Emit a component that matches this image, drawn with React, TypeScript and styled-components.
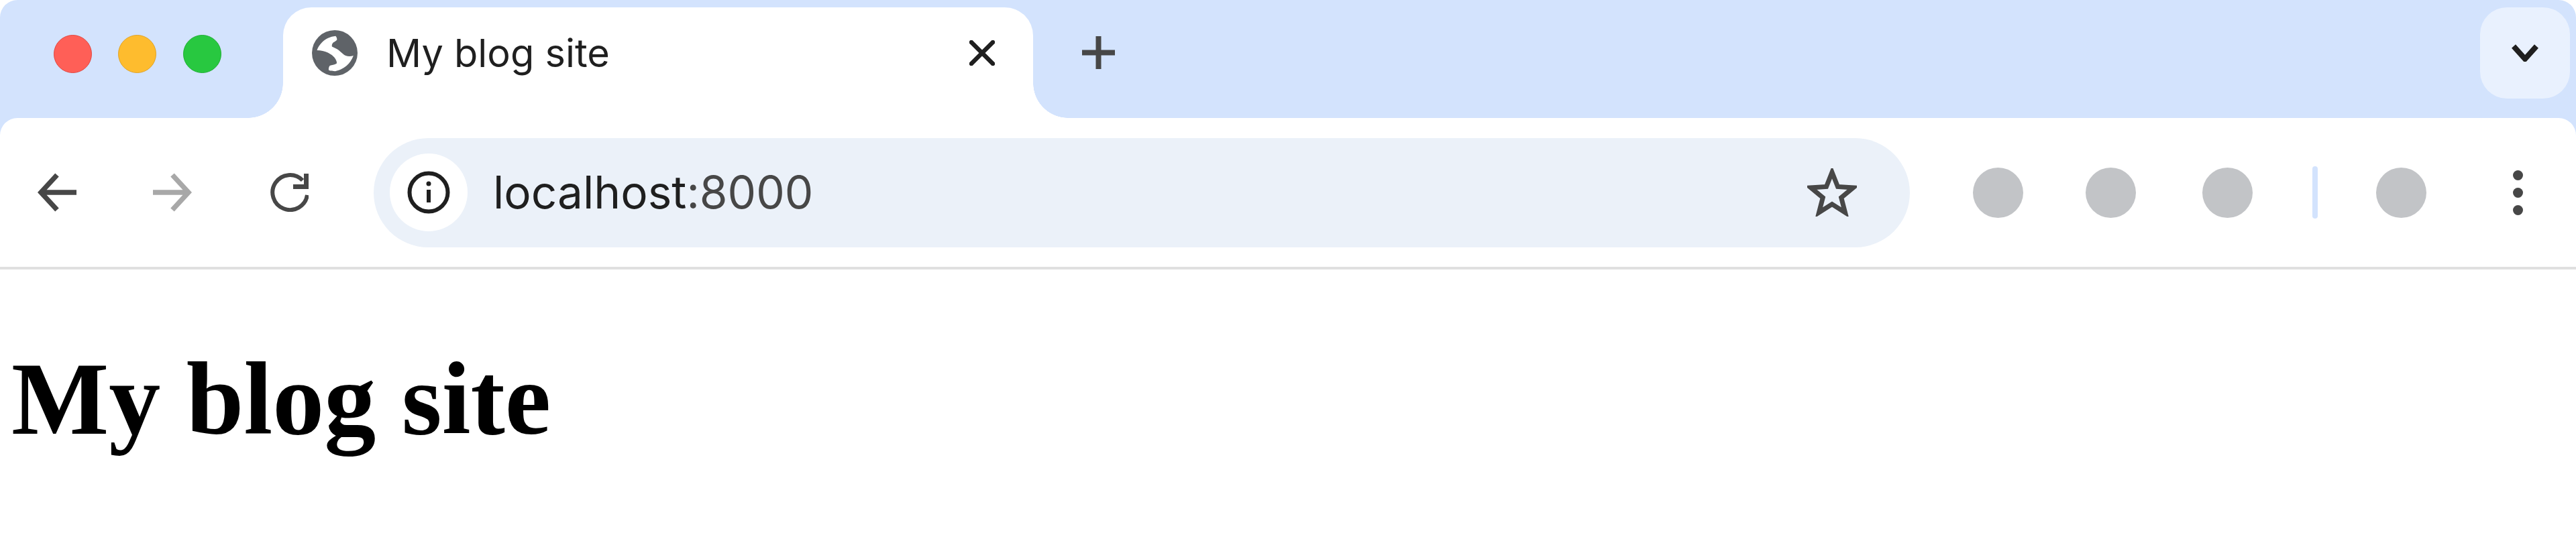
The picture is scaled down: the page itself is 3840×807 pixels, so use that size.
import styled, { createGlobalStyle } from "styled-components"

const GlobalStyle = createGlobalStyle`
  html, body {
    margin: 0;
    background: #fff;
  }
`

const Page = styled.div`
  width: 3840px;
  height: 807px;
  overflow: hidden;
  background: #fff;
`

const BrowserChrome = styled.header`
  background: #d3e3fd;
  border-radius: 26px 26px 0 0;
  font-family: Inter, "Liberation Sans", sans-serif;
`

const TabStrip = styled.div`
  display: flex;
  align-items: flex-start;
  height: 165px;
  padding-top: 11px;
`

const TrafficLights = styled.div`
  display: flex;
  gap: 39.5px;
  width: 422px;
  padding: 41px 0 0 79.5px;
  box-sizing: border-box;
`

const Light = styled.span<{ $fill: string; $edge: string }>`
  width: 57px;
  height: 57px;
  box-sizing: border-box;
  border-radius: 50%;
  background: ${props => props.$fill};
  border: 1px solid ${props => props.$edge};
`

const Tab = styled.div`
  position: relative;
  display: flex;
  align-items: center;
  width: 1118px;
  height: 165px;
  box-sizing: border-box;
  padding: 0 57px 29px 43px;
  background: #fff;
  border-radius: 42px 42px 0 0;

  &::before,
  &::after {
    content: "";
    position: absolute;
    bottom: 0;
    width: 52px;
    height: 52px;
  }

  &::before {
    left: -52px;
    background: radial-gradient(circle at 0 0, #d3e3fd 51.5px, #fff 52px);
  }

  &::after {
    right: -52px;
    background: radial-gradient(circle at 100% 0, #d3e3fd 51.5px, #fff 52px);
  }
`

const TabTitle = styled.span`
  flex: 1;
  margin-left: 43px;
  font-size: 57.7px;
  line-height: 68px;
  color: #1f1f1f;
`

const NewTabButton = styled.button`
  display: flex;
  margin: 43px 0 0 73px;
  padding: 0;
  border: 0;
  background: none;
`

const TabSearchButton = styled.button`
  display: flex;
  align-items: center;
  justify-content: center;
  width: 134px;
  height: 136px;
  margin: 0 9px 0 auto;
  padding: 0;
  border: 0;
  border-radius: 40px;
  background: #e9f1fe;
`

const Toolbar = styled.div`
  display: flex;
  align-items: center;
  height: 222px;
  padding-left: 56px;
  background: #fff;
  border-radius: 26px 26px 0 0;
`

const NavButton = styled.button<{ $gap?: number }>`
  display: flex;
  margin: 0 ${props => props.$gap ?? 0}px 0 0;
  padding: 0;
  border: 0;
  background: none;
`

const Omnibox = styled.div`
  flex: 1;
  display: flex;
  align-items: center;
  height: 163px;
  padding: 0 79px 0 24px;
  background: #ebf1f9;
  border-radius: 82px;
`

const SecurityChip = styled.span`
  display: flex;
  align-items: center;
  justify-content: center;
  width: 116px;
  height: 116px;
  border-radius: 50%;
  background: #fff;
`

const Address = styled.div`
  flex: 1;
  margin-left: 38px;
  font-size: 67.5px;
  line-height: 80px;
  color: #1f1f1f;

  span {
    color: #474747;
  }
`

const ToolbarEnd = styled.div`
  display: flex;
  align-items: center;
  width: 993px;
  padding: 0 79px 0 94px;
  box-sizing: border-box;
`

const ExtensionDot = styled.span<{ $gap?: number }>`
  flex: none;
  width: 75px;
  height: 75px;
  margin-right: ${props => props.$gap ?? 0}px;
  border-radius: 50%;
  background: #c2c4c7;
`

const Divider = styled.span`
  flex: none;
  width: 8px;
  height: 78px;
  margin-right: 87px;
  border-radius: 4px;
  background: #d3e3fd;
`

const Kebab = styled.div`
  display: flex;
  flex-direction: column;
  gap: 11px;
  margin-left: auto;

  span {
    width: 15px;
    height: 15px;
    border-radius: 50%;
    background: #474747;
  }
`

const Rule = styled.div`
  height: 4px;
  background: #e0e0e0;
`

const Content = styled.main`
  padding: 105px 17px 0;
`

const Heading = styled.h1`
  margin: 0;
  font-family: "Liberation Serif", "Times New Roman", serif;
  font-size: 154px;
  line-height: 177px;
  font-weight: bold;
  color: #000;
`

const App = () => {
  return (
    <Page>
      <GlobalStyle />
      <BrowserChrome>
        <TabStrip>
          <TrafficLights>
            <Light $fill="#ff5f57" $edge="#e2463f" />
            <Light $fill="#febc2e" $edge="#e1a325" />
            <Light $fill="#28c840" $edge="#1fae33" />
          </TrafficLights>
          <Tab>
            <svg width="68" height="68" viewBox="0 0 100 100">
              <circle cx="50" cy="50" r="50" fill="#5f6368" />
              <path
                fill="#fff"
                d="M52 13C40 14 30 19 22 27C17 32 13 38 11 44C20 44 28 46 34 49C42 53 49 58 52 64C54 68 55 71 54 73C49 76 44 76 39 78C37 81 36 85 37 88C42 90 46 90 51 90C60 88 69 84 76 78C83 72 88 64 91 56C85 58 79 58 74 56C68 53 64 48 59 44C54 40 49 39 44 36C43 32 45 29 47 27C50 25 53 24 55 21C55 18 54 15 52 13Z"
              />
            </svg>
            <TabTitle>My blog site</TabTitle>
            <svg width="38" height="38" viewBox="0 0 38 38">
              <path d="M3 3L35 35M35 3L3 35" stroke="#1f1f1f" strokeWidth="6.5" strokeLinecap="round" />
            </svg>
          </Tab>
          <NewTabButton aria-label="New tab">
            <svg width="49" height="49" viewBox="0 0 49 49">
              <path d="M24.5 0V49M0 24.5H49" stroke="#474747" strokeWidth="8" />
            </svg>
          </NewTabButton>
          <TabSearchButton aria-label="Search tabs">
            <svg width="40" height="26" viewBox="0 0 40 26">
              <path d="M3 3L20 22L37 3" fill="none" stroke="#1f1f1f" strokeWidth="8" />
            </svg>
          </TabSearchButton>
        </TabStrip>
        <Toolbar>
          <NavButton $gap={114} aria-label="Back">
            <svg width="58" height="58" viewBox="0 0 58 58">
              <path d="M58 29H6M29 3L5 29L29 55" fill="none" stroke="#474747" strokeWidth="7.5" />
            </svg>
          </NavButton>
          <NavButton $gap={116} aria-label="Forward">
            <svg width="58" height="58" viewBox="0 0 58 58">
              <path d="M0 29H52M29 3L53 29L29 55" fill="none" stroke="#a8a8a8" strokeWidth="7.5" />
            </svg>
          </NavButton>
          <NavButton $gap={97} aria-label="Reload">
            <svg width="58" height="58" viewBox="0 0 58 58">
              <path d="M49 11A26 26 0 1 0 56 33" fill="none" stroke="#474747" strokeWidth="6" />
              <path d="M58 1V24H35V17H51V1Z" fill="#474747" />
            </svg>
          </NavButton>
          <Omnibox>
            <SecurityChip>
              <svg width="64" height="64" viewBox="0 0 64 64">
                <circle cx="32" cy="32" r="28.5" fill="none" stroke="#1f1f1f" strokeWidth="6" />
                <path d="M32 28V47" stroke="#1f1f1f" strokeWidth="6" />
                <circle cx="32" cy="19" r="3.5" fill="#1f1f1f" />
              </svg>
            </SecurityChip>
            <Address>
              localhost<span>:8000</span>
            </Address>
            <svg width="74" height="72" viewBox="0 0 74 72">
              <path
                d="M37 6L45.5 27.5L68.5 29L50.7 43.7L56.5 66L37 53.6L17.5 66L23.3 43.7L5.5 29L28.5 27.5Z"
                fill="none"
                stroke="#474747"
                strokeWidth="7"
              />
            </svg>
          </Omnibox>
          <ToolbarEnd>
            <ExtensionDot $gap={93} />
            <ExtensionDot $gap={99} />
            <ExtensionDot $gap={89} />
            <Divider />
            <ExtensionDot />
            <Kebab>
              <span />
              <span />
              <span />
            </Kebab>
          </ToolbarEnd>
        </Toolbar>
        <Rule />
      </BrowserChrome>
      <Content>
        <Heading>My blog site</Heading>
      </Content>
    </Page>
  )
}

export default App
